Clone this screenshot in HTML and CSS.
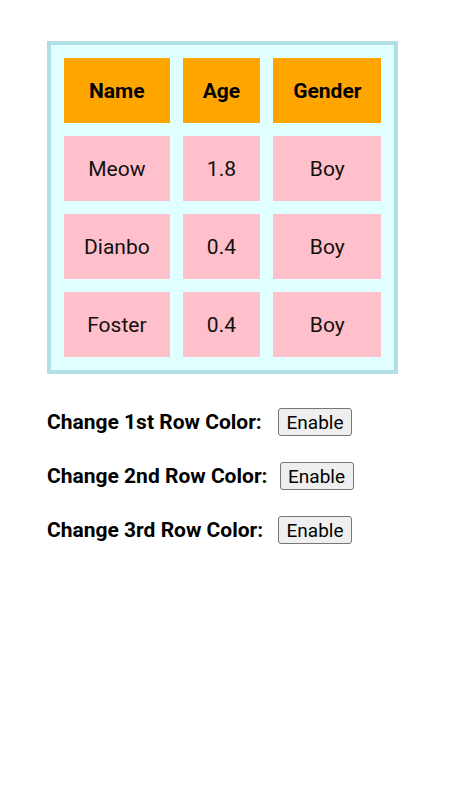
FILE: index.html
```html
<!DOCTYPE html>
<html>
<head>
<meta charset="utf-8">
<link rel="stylesheet" href="styles.css">
</head>
<body>
<div class="page">
  <table class="pets">
    <thead>
      <tr><th>Name</th><th>Age</th><th>Gender</th></tr>
    </thead>
    <tbody>
      <tr><td>Meow</td><td>1.8</td><td>Boy</td></tr>
      <tr><td>Dianbo</td><td>0.4</td><td>Boy</td></tr>
      <tr><td>Foster</td><td>0.4</td><td>Boy</td></tr>
    </tbody>
  </table>
  <div class="controls">
    <div class="control"><span class="label">Change 1st Row Color:</span><button class="btn">Enable</button></div>
    <div class="control"><span class="label">Change 2nd Row Color:</span><button class="btn">Enable</button></div>
    <div class="control"><span class="label">Change 3rd Row Color:</span><button class="btn">Enable</button></div>
  </div>
</div>
</body>
</html>
```
FILE: styles.css
```css
html, body {
  margin: 0;
  padding: 0;
  background: #ffffff;
}
body {
  font-family: Roboto, "Liberation Sans", Arial, sans-serif;
  color: #111111;
}
.page {
  padding: 41px 0 0 47px;
}
.pets {
  border: 4px solid #b0e0e6;
  background: #e0ffff;
  border-spacing: 13px;
  font-size: 21px;
}
.pets th,
.pets td {
  height: 65px;
  padding: 0 20px;
  text-align: center;
  vertical-align: middle;
  box-sizing: border-box;
}
.pets th {
  background: #ffa500;
  font-weight: 700;
  color: #000;
}
.pets td {
  background: #ffc0cb;
  font-weight: 400;
}
.controls {
  margin-top: 34px;
  display: flex;
  flex-direction: column;
  gap: 26px;
}
.control {
  display: flex;
  align-items: center;
  height: 28px;
  gap: 12px;
}
.label {
  min-width: 219px;
  flex-shrink: 0;
  font-size: 21px;
  font-weight: 700;
  color: #000;
}
.btn {
  font-family: Roboto, "Liberation Sans", Arial, sans-serif;
  font-size: 19px;
  height: 28px;
  width: 74px;
  padding: 0;
  background: #efefef;
  border: 1px solid #767676;
  border-radius: 3px;
  color: #000;
}
```
